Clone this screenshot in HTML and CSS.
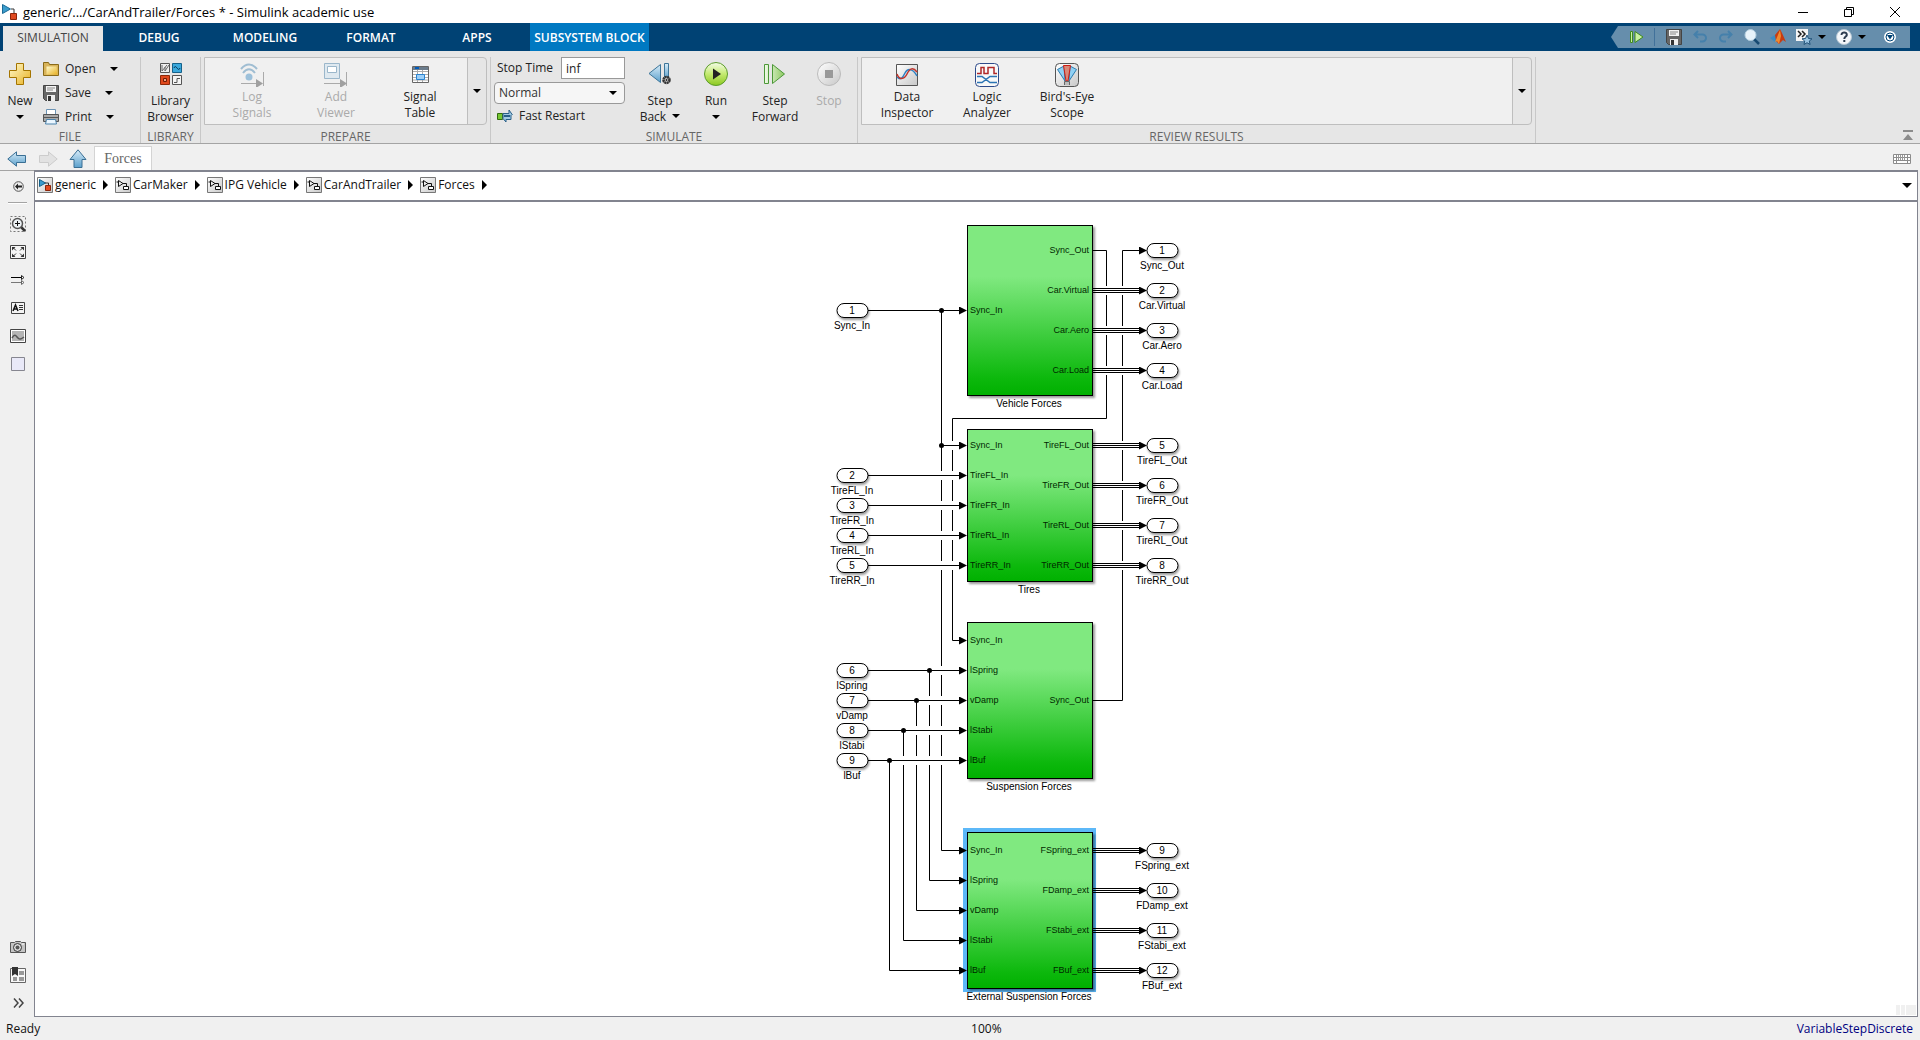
FILE: index.html
```html
<!DOCTYPE html>
<html lang="en">
<head>
  <meta charset="UTF-8" />
  <meta name="viewport" content="width=device-width, initial-scale=1.0"/>
  <title>generic/.../CarAndTrailer/Forces * - Simulink academic use</title>
  <link rel="stylesheet" href="styles.css">
</head>
<body>
  <!-- shared icons and gradients -->
  <svg class="defs" width="0" height="0" aria-hidden="true">
    <defs>
      <linearGradient id="gold" x1="0" y1="0" x2="1" y2="1"><stop offset="0" stop-color="#fffbd0"/><stop offset="1" stop-color="#e8b020"/></linearGradient>
      <linearGradient id="blue" x1="0" y1="0" x2="0" y2="1"><stop offset="0" stop-color="#d8ecf8"/><stop offset="1" stop-color="#5ba0cc"/></linearGradient>
      <linearGradient id="grey" x1="0" y1="0" x2="1" y2="1"><stop offset="0" stop-color="#ffffff"/><stop offset="1" stop-color="#c8c8c8"/></linearGradient>
      <linearGradient id="lime" x1="0" y1="0" x2="0" y2="1"><stop offset="0" stop-color="#f4fce8"/><stop offset="0.5" stop-color="#c4ea70"/><stop offset="1" stop-color="#8cc820"/></linearGradient>
      <linearGradient id="leaf" x1="0" y1="0" x2="1" y2="0"><stop offset="0" stop-color="#f0fae8"/><stop offset="1" stop-color="#8cc860"/></linearGradient>
      <linearGradient id="block" x1="0" y1="0" x2="0" y2="1"><stop offset="0.3" stop-color="#80e980"/><stop offset="0.9" stop-color="#0cb80c"/><stop offset="1" stop-color="#00b000"/></linearGradient>
      <marker id="arrow" markerUnits="userSpaceOnUse" markerWidth="8" markerHeight="8" refX="7" refY="4" orient="auto"><path d="M0 0L8 4L0 8z"/></marker>
    </defs>
    <symbol id="caret" viewBox="0 0 8 4"><path d="M0 0h8L4 4z"/></symbol>
    <symbol id="next" viewBox="0 0 5 10"><path d="M0 0L5 5L0 10z"/></symbol>
    <symbol id="floppy" viewBox="0 0 16 16">
      <path d="M.5.5h15v15h-13l-2-2z" fill="#666" stroke="#444"/>
      <path d="M3 1h10v6H3z" fill="#f4f4f4"/><path d="M4 3h8M4 5h6" stroke="#888"/>
      <path d="M4 10h8v6H4z" fill="#eee"/><path d="M5 11h3v5H5z" fill="#333"/>
    </symbol>
    <symbol id="subsystem" viewBox="0 0 16 16">
      <path d="M.5.5h15v15H.5z" fill="url(#grey)" stroke="#777"/>
      <path d="M3.500 3.500v6l4.500-3zM1.500 5h2M8 6.500h3.500V9" fill="none" stroke="#111"/><path d="M8.500 9.500h5v3h-5z" fill="#fff" stroke="#111"/>
    </symbol>
  </svg>

  <header class="titlebar">
    <svg width="16" height="16" viewBox="0 0 16 16"><path d="M.5.5l8 4.500-8 4.500z" fill="#3a9ccc" stroke="#1b6a96"/><path d="M9 5h3v5" fill="none" stroke="#333"/><path d="M8.500 9.500h6v6h-6z" fill="#e04a20" stroke="#8c2408"/></svg>
    <h1>generic/.../CarAndTrailer/Forces * - Simulink academic use</h1>
    <div class="window-buttons">
      <button aria-label="Minimize"><svg width="10" height="10"><path d="M0 5.500h10" stroke="#000"/></svg></button>
      <button aria-label="Restore"><svg width="10" height="10"><path d="M.5 2.500h7v7h-7zM2.500 2V.5h7v7H8" fill="none" stroke="#000"/></svg></button>
      <button aria-label="Close"><svg width="10" height="10"><path d="M0 0l10 10M10 0L0 10" stroke="#000"/></svg></button>
    </div>
  </header>

  <nav class="tabs">
    <button class="tab active">SIMULATION</button>
    <button class="tab">DEBUG</button>
    <button class="tab">MODELING</button>
    <button class="tab">FORMAT</button>
    <button class="tab">APPS</button>
    <button class="tab context">SUBSYSTEM BLOCK</button>
    <div class="quick">
      <button class="quick-run" aria-label="Run"><svg width="14" height="14" viewBox="0 0 14 14"><path d="M.5 1.500h2v11h-2zM5 1.500l8 5.500-8 5.500z" fill="#c8f0a0" stroke="#3f8a20"/></svg></button>
      <button aria-label="Save"><svg width="16" height="16"><use href="#floppy"/></svg></button>
      <button aria-label="Undo"><svg width="16" height="16" viewBox="0 0 16 16"><path d="M6 2L2.500 5.500 6 9M3 5.500h7.500a3.500 3.500 0 0 1 0 7H8" fill="none" stroke="#4580ab" stroke-width="2"/></svg></button>
      <button aria-label="Redo"><svg width="16" height="16" viewBox="0 0 16 16"><path d="M10 2l3.500 3.500L10 9M13 5.500H5.500a3.500 3.500 0 0 0 0 7H8" fill="none" stroke="#4580ab" stroke-width="2"/></svg></button>
      <button aria-label="Search"><svg width="16" height="16" viewBox="0 0 16 16"><path d="M10 10l5 5" stroke="#184a72" stroke-width="2.500"/><circle cx="6.500" cy="6" r="5.500" fill="#e8f3fa" stroke="#b4cede"/></svg></button>
      <button aria-label="MATLAB"><svg width="16" height="16" viewBox="0 0 16 16"><path d="M0 9l5-3 3 3-3 4z" fill="#3b8cc4"/><path d="M5 6l5-6 2 4 4 9-3-2-4 4-3-3z" fill="#c83c10"/><path d="M5 13l5-12 1 6-2 8-2-3z" fill="#f08a30"/></svg></button>
      <button aria-label="Shortcuts"><svg width="16" height="16" viewBox="0 0 16 16"><path d="M0 0h12v12H0z" fill="#f5f5f5"/><path d="M2 2l3 3-3 3M6 2l3 3-3 3" fill="none" stroke="#222" stroke-width="1.500"/><path d="M11 6l1.500 3.500 3.500.3-2.700 2.200.8 3.500-3.100-1.800L8 15.500l.7-3.500L6 9.800l3.500-.3z" fill="#9ac4e2" stroke="#235379"/></svg><svg class="caret" width="8" height="4"><use href="#caret"/></svg></button>
      <button aria-label="Help"><svg width="16" height="16" viewBox="0 0 16 16"><circle cx="8" cy="8" r="7.500" fill="#f4f7fa" stroke="#b8c8d4"/><path d="M5.500 6c0-3.500 5.500-3.300 5.300 0 0 1.500-2.500 1.800-2.500 4M8.300 11v2" fill="none" stroke="#2c3c50" stroke-width="2"/></svg><svg class="caret" width="8" height="4"><use href="#caret"/></svg></button>
      <button aria-label="Quick access menu"><svg width="12" height="12" viewBox="0 0 12 12"><circle cx="6" cy="6" r="5" fill="#fff" stroke="#fff" stroke-width="2"/><circle cx="6" cy="6" r="4" fill="#fff" stroke="#004274"/><path d="M3 4h6L6 8.500z" fill="#004274"/></svg></button>
    </div>
  </nav>

  <section class="toolstrip">
    <div class="group file">
      <div class="tools">
        <button class="big new"><svg width="22" height="22" viewBox="0 0 22 22"><path d="M7.500.5h7v7h7v7h-7v7h-7v-7h-7v-7h7z" fill="url(#gold)" stroke="#a47400"/></svg><span>New</span><svg class="caret" width="8" height="4"><use href="#caret"/></svg></button>
        <div class="stack">
          <button class="small"><svg width="16" height="14" viewBox="0 0 16 14"><path d="M.5 13.500V.5h5l1 2h9v11z" fill="#d9b45a" stroke="#8a6a18"/><path d="M3.500 4.500h10l1 8h-11z" fill="url(#gold)"/></svg><span>Open</span><svg class="caret" width="8" height="4"><use href="#caret"/></svg></button>
          <button class="small"><svg width="16" height="16"><use href="#floppy"/></svg><span>Save</span><svg class="caret" width="8" height="4"><use href="#caret"/></svg></button>
          <button class="small"><svg width="16" height="16" viewBox="0 0 16 16"><path d="M3.500.5h9v6h-9z" fill="#fff" stroke="#6b93b4"/><path d="M.5 5.500h15v7H.5z" fill="#a8a8a8" stroke="#555"/><path d="M1 8.500h14" stroke="#555"/><path d="M3.500 10.500h9l1 4.500h-11z" fill="#eaf6ff" stroke="#4b83ac"/></svg><span>Print</span><svg class="caret" width="8" height="4"><use href="#caret"/></svg></button>
        </div>
      </div>
      <h2>FILE</h2>
    </div>

    <div class="group library">
      <div class="tools">
        <button class="big"><svg width="22" height="22" viewBox="0 0 22 22"><path d="M.5.5h9v9h-9z" fill="#eee" stroke="#555"/><path d="M2 2v6l5-6M5 4v4l4-6" fill="none" stroke="#666"/><path d="M12.500.5h9v9h-9z" fill="#3aa8dc" stroke="#14618a"/><path d="M14 5c2-5 4 5 6 0" fill="none" stroke="#073a58"/><path d="M.5 12.500h9v9h-9z" fill="#e0481c" stroke="#8c2808"/><path d="M3.500 15.500h3v3h-3z" fill="#f4a080" stroke="#701c04"/><path d="M12.500 12.500h9v9h-9z" fill="#f4f4f4" stroke="#555"/><path d="M14 19.500h3v-4h3" fill="none" stroke="#555"/></svg><span>Library<br>Browser</span></button>
      </div>
      <h2>LIBRARY</h2>
    </div>

    <div class="group prepare">
      <div class="gallery">
        <div class="gallery-items">
          <button class="big" disabled><svg width="24" height="24" viewBox="0 0 24 24"><path d="M1 6c5-6 11-6 16 0M3 10c4-5 8-5 12 0" fill="none" stroke="#9fbdd2" stroke-width="2"/><circle cx="9" cy="14" r="3.500" fill="#9cc0da"/><path d="M1 20.500h16M23.500 9v14" stroke="#aaa"/><path d="M16 16l7 4.500-7 4.500z" fill="#a0a0a0"/></svg><span>Log<br>Signals</span></button>
          <button class="big" disabled><svg width="24" height="24" viewBox="0 0 24 24"><path d="M.5.500h15v15H.5z" fill="#dfe9f0" stroke="#9bb7cb"/><path d="M3.500 3.500h9v6h-9z" fill="#fff" stroke="#9bb7cb"/><path d="M0 20.500h16M22.500 9v14" stroke="#aaa"/><path d="M16 16l7 4.500-7 4.500z" fill="#a0a0a0"/></svg><span>Add<br>Viewer</span></button>
          <button class="big"><svg width="24" height="24" viewBox="0 0 24 24"><path d="M4.500 3.500h16v16h-16z" fill="#fff" stroke="#666"/><path d="M5 4h15v3H5z" fill="#6b7c8c"/><path d="M7 5h4" stroke="#005bbb" stroke-width="2"/><path d="M5 8.500h15M5 11.500h15M5 14.500h15M5 17h15M9.500 7v12M14.500 7v12" stroke="#aaa"/><path d="M8.500 11.500h8v5h-8z" fill="#9ccff8" stroke="#2a83d0"/></svg><span>Signal<br>Table</span></button>
        </div>
        <button class="gallery-more" aria-label="More prepare tools"><svg width="8" height="4"><use href="#caret"/></svg></button>
      </div>
      <h2>PREPARE</h2>
    </div>

    <div class="group simulate">
      <div class="tools">
        <div class="run-options">
          <div class="stop-time"><label for="stop-time">Stop Time</label><input id="stop-time" type="text" value="inf"></div>
          <div class="mode"><select aria-label="Simulation mode"><option>Normal</option></select><svg class="mode-caret" width="8" height="4"><use href="#caret"/></svg></div>
          <button class="small"><svg width="16" height="14" viewBox="0 0 16 14"><path d="M.5 4.500h5v6h-5z" fill="#77c832" stroke="#336b10"/><path d="M6 9V4.500h6V1l3.500 5M14 6v4.500H9V13L5.500 9" fill="#a0cae4" stroke="#285f88"/><path d="M7 7h6" stroke="#285f88" stroke-width="2"/></svg><span>Fast Restart</span></button>
        </div>
        <button class="big"><svg width="24" height="24" viewBox="0 0 24 24"><path d="M12.500 2.500v18L1 11.500z" fill="url(#blue)" stroke="#3d7599"/><path d="M16.500 1.500h4v15h-4z" fill="url(#blue)" stroke="#3d7599"/><circle cx="18.500" cy="18" r="3" fill="#ddd" stroke="#333" stroke-width="2.500" stroke-dasharray="2 .4"/><circle cx="18.500" cy="18" r="1" fill="#222"/></svg><span>Step<br>Back <svg class="caret" width="8" height="4"><use href="#caret"/></svg></span></button>
        <button class="big run"><svg width="24" height="24" viewBox="0 0 24 24"><circle cx="12" cy="12" r="11.500" fill="url(#lime)" stroke="#5c9c2c"/><path d="M9 6.500l8 5.500-8 5.500z" fill="#222"/></svg><span>Run</span><svg class="caret" width="8" height="4"><use href="#caret"/></svg></button>
        <button class="big forward"><svg width="24" height="24" viewBox="0 0 24 24"><path d="M1.500 2.500h4v19h-4zM9.500 2.500l12 9.500-12 9.500z" fill="url(#leaf)" stroke="#4c9838"/></svg><span>Step<br>Forward</span></button>
        <button class="big stop" disabled><svg width="24" height="24" viewBox="0 0 24 24"><circle cx="12" cy="12" r="11.500" fill="url(#grey)" stroke="#bbb"/><path d="M8 8h8v8H8z" fill="#999"/></svg><span>Stop</span></button>
      </div>
      <h2>SIMULATE</h2>
    </div>

    <div class="group review">
      <div class="gallery">
        <div class="gallery-items">
          <button class="big"><svg width="24" height="24" viewBox="0 0 24 24"><path d="M1.500 1.500h21v21h-21z" fill="url(#grey)" stroke="#555"/><path d="M2 14c4 4 6 0 8-4s7-6 12 3" fill="none" stroke="#2c80c4" stroke-width="1.500"/><path d="M2 11c2 6 7 6 10 0s6-7 10-2" fill="none" stroke="#c0342c" stroke-width="1.500"/></svg><span>Data<br>Inspector</span></button>
          <button class="big"><svg width="24" height="24" viewBox="0 0 24 24"><rect x=".5" y=".5" width="23" height="23" rx="4" fill="#f8f8f8" stroke="#2d4a8a"/><path d="M2 10.500h4v-6h3v6h4v-6h6v6h3" fill="none" stroke="#b02828" stroke-width="1.500"/><path d="M2 13.500h5l8 6h7M2 19.500h5l8-6h7" fill="none" stroke="#2c74b4" stroke-width="1.500"/></svg><span>Logic<br>Analyzer</span></button>
          <button class="big"><svg width="24" height="24" viewBox="0 0 24 24"><rect x=".5" y=".5" width="23" height="23" rx="4" fill="url(#grey)" stroke="#555"/><path d="M2.500 6.500L9 3l1 15zM21.500 6.500L15 3l-1 15z" fill="#8fd0f4" stroke="#2a7cb0"/><path d="M8.500 2.500h7L13 18h-2z" fill="#d88878" stroke="#cc1c14"/><path d="M9.500 22v-3.500h5V22" fill="#bbb" stroke="#666"/></svg><span>Bird's-Eye<br>Scope</span></button>
        </div>
        <button class="gallery-more" aria-label="More review tools"><svg width="8" height="4"><use href="#caret"/></svg></button>
      </div>
      <h2>REVIEW RESULTS</h2>
    </div>
    <button class="collapse" aria-label="Minimize toolstrip"><svg width="10" height="10"><path d="M0 0h10v2H0zM5 4l5 6H0z" fill="#8c8c8c"/></svg></button>
  </section>

  <div class="docbar">
    <button aria-label="Back"><svg width="20" height="16" viewBox="0 0 20 16"><path d="M.8 8L9.500.8v3.700h9v7h-9v3.700z" fill="url(#blue)" stroke="#3a6f94"/></svg></button>
    <button aria-label="Forward" disabled><svg width="20" height="16" viewBox="0 0 20 16"><path d="M19.200 8L10.500.8v3.700h-9v7h9v3.700z" fill="#e2e2e2" stroke="#ccc"/></svg></button>
    <button aria-label="Up"><svg width="18" height="19" viewBox="0 0 18 19"><path d="M9 .8l8 9.700h-4v8H5v-8H1z" fill="url(#blue)" stroke="#3a6f94"/></svg></button>
    <button class="doc-tab">Forces</button>
    <button class="keyboard" aria-label="Keyboard"><svg width="18" height="10" viewBox="0 0 18 10"><path d="M.5.500h17v9H.5zM0 3.500h18M0 6.500h18M3.500 0v10M14.500 0v10" fill="#fff" stroke="#8c8c8c"/><path d="M5.500 1v5M7.500 1v5M9.500 1v5M11.500 1v5" stroke="#999"/></svg></button>
  </div>

  <main class="workspace">
    <aside class="palette">
      <button class="hide-browser" aria-label="Hide browser"><svg width="11" height="11" viewBox="0 0 11 11"><circle cx="5.500" cy="5.500" r="4.800" fill="#eee" stroke="#555"/><path d="M2 5.500l3-3v2h4v2H5v2z" fill="#222"/></svg></button>
      <hr>
      <button aria-label="Zoom"><svg width="16" height="16" viewBox="0 0 16 16"><path d="M.5.500h15v15H.5z" fill="none" stroke="#777" stroke-dasharray="2 2"/><path d="M11 11l4 4" stroke="#333" stroke-width="2.500"/><circle cx="7.500" cy="7.500" r="5" fill="#eef3f6" stroke="#555" stroke-width="1.500"/><path d="M5 7.500h5M7.500 5v5" stroke="#111"/></svg></button>
      <button aria-label="Fit to view"><svg width="16" height="14" viewBox="0 0 16 14"><path d="M.5.500h15v13H.5z" fill="#f6f6f6" stroke="#444"/><path d="M6 5.500L3 2.500M10 5.500l3-3M6 8.500l-3 3M10 8.500l3 3" stroke="#333"/><path d="M2 2h3.500L2 5.500zM14 2v3.500L10.500 2zM2 12V8.500L5.500 12zM14 12h-3.500L14 8.500z" fill="#333"/></svg></button>
      <button aria-label="Sample time"><svg width="14" height="12" viewBox="0 0 14 12"><path d="M0 3.500h11" stroke="#000"/><path d="M0 8.500h11" stroke="#777"/><path d="M10.500 1.500l2.500 2-2.500 2z" fill="#fff" stroke="#222"/><path d="M10.500 6.500l2.500 2-2.500 2z" fill="#fff" stroke="#666"/></svg></button>
      <button aria-label="Annotation"><svg width="14" height="12" viewBox="0 0 14 12"><path d="M.5.500h13v11H.5z" fill="#f4f4f4" stroke="#444"/><path d="M2 9l2.500-6L7 9M3 7h3" fill="none" stroke="#111" stroke-width="1.500"/><path d="M8 3.500h4M8 5.500h4M8 7.500h4" stroke="#333"/></svg></button>
      <button aria-label="Image"><svg width="16" height="14" viewBox="0 0 16 14"><path d="M.5.500h15v13H.5z" fill="#fff" stroke="#444"/><path d="M2 2h12v10H2z" fill="#b4b4b4"/><path d="M2 9c3-5 4-2 6 0s3 1 6-1" fill="none" stroke="#555" stroke-width="1.500"/></svg></button>
      <button aria-label="Area"><svg width="14" height="14"><path d="M.5.500h13v13H.5z" fill="#e9e9f8" stroke="#868690"/></svg></button>
      <button class="to-bottom" aria-label="Screenshot"><svg width="16" height="12" viewBox="0 0 16 12"><path d="M.5 1.500h4l1-1h5l1 1h4v10H.5z" fill="#c4c4c4" stroke="#555"/><circle cx="7.500" cy="6.500" r="4" fill="#ddd" stroke="#333"/><circle cx="7.500" cy="6.500" r="2" fill="#555"/><path d="M12 3h2" stroke="#fff"/></svg></button>
      <button aria-label="Viewmarks"><svg width="16" height="16" viewBox="0 0 16 16"><path d="M.5 1.500h15v14H.5z" fill="#f8f8f8" stroke="#666"/><path d="M9 4h5v4H9zM3 10h4v4H3zM9 10h5v4H9z" fill="#999"/><path d="M2 0h6v9L5 7 2 9z" fill="#333"/></svg></button>
      <button aria-label="More"><svg width="11" height="10"><path d="M1 .5L5 5 1 9.500M6 .5L10 5 6 9.500" fill="none" stroke="#444" stroke-width="1.500"/></svg></button>
    </aside>

    <section class="editor">
      <nav class="breadcrumb">
        <a href="#"><svg width="16" height="16" viewBox="0 0 16 16"><path d="M.5.500h15v15H.5z" fill="url(#grey)" stroke="#777"/><path d="M2.500 2.500l6 3.500-6 3.500z" fill="#3a9ccc" stroke="#14618a"/><path d="M8 6h3.500v3" fill="none" stroke="#333"/><path d="M8.500 8.500h5v5h-5z" fill="#e04a20" stroke="#8c2408"/></svg>generic</a>
        <svg width="5" height="10"><use href="#next"/></svg>
        <a href="#"><svg width="16" height="16"><use href="#subsystem"/></svg>CarMaker</a>
        <svg width="5" height="10"><use href="#next"/></svg>
        <a href="#"><svg width="16" height="16"><use href="#subsystem"/></svg>IPG Vehicle</a>
        <svg width="5" height="10"><use href="#next"/></svg>
        <a href="#"><svg width="16" height="16"><use href="#subsystem"/></svg>CarAndTrailer</a>
        <svg width="5" height="10"><use href="#next"/></svg>
        <a href="#"><svg width="16" height="16"><use href="#subsystem"/></svg>Forces</a>
        <svg width="5" height="10"><use href="#next"/></svg>
        <button class="history" aria-label="History"><svg width="10" height="5" viewBox="0 0 8 4"><use href="#caret"/></svg></button>
      </nav>

      <div class="canvas">
        <svg class="diagram" width="440" height="814" viewBox="756 202 440 814">
          <rect class="selection" x="963" y="828" width="133" height="164"/>
          <!-- vertical runs of the branched signals -->
          <path class="wire" d="M941.500 310.500V850.500M952.500 418.500V640.500M1106.500 250.500V418.500M1122.500 250.500V700.500M929.500 670.500V880.500M916.500 700.500V910.500M903.500 730.500V940.500M889.500 760.500V970.500"/>
          <!-- gaps where a signal passes under another -->
          <path class="gap" d="M939 475.500h5M939 505.500h5M939 535.500h5M939 565.500h5M939 670.500h5M939 700.500h5M939 730.500h5M939 760.500h5M950 445.500h5M950 475.500h5M950 505.500h5M950 535.500h5M950 565.500h5M1104 290.500h5M1104 330.500h5M1104 370.500h5M1120 290.500h5M1120 330.500h5M1120 370.500h5M1120 445.500h5M1120 485.500h5M1120 525.500h5M1120 565.500h5M927 700.500h5M927 730.500h5M927 760.500h5M914 730.500h5M914 760.500h5M901 760.500h5"/>
          <path class="wire" d="M952.500 418.500H1106.500M1093 250.500h13.500M1093 700.500h29.500"/>

          <g class="wire to-port">
            <path d="M868 310.500H966"/><path d="M941.500 445.500H966"/><path d="M868 475.500H966"/><path d="M868 505.500H966"/><path d="M868 535.500H966"/><path d="M868 565.500H966"/>
            <path d="M952.500 640.500H966"/><path d="M868 670.500H966"/><path d="M868 700.500H966"/><path d="M868 730.500H966"/><path d="M868 760.500H966"/>
            <path d="M941.500 850.500H966"/><path d="M929.500 880.500H966"/><path d="M916.500 910.500H966"/><path d="M903.500 940.500H966"/><path d="M889.500 970.500H966"/>
            <path d="M1122.500 250.500H1146"/>
            <path d="M1093 290.500H1146"/><path d="M1093 330.500H1146"/><path d="M1093 370.500H1146"/>
            <path d="M1093 445.500H1146"/><path d="M1093 485.500H1146"/><path d="M1093 525.500H1146"/><path d="M1093 565.500H1146"/>
            <path d="M1093 850.500H1146"/><path d="M1093 890.500H1146"/><path d="M1093 930.500H1146"/><path d="M1093 970.500H1146"/>
          </g>
          <!-- outer lines of the bus signals -->
          <path class="wire" d="M1093 288.500h48M1093 292.500h48M1093 328.500h48M1093 332.500h48M1093 368.500h48M1093 372.500h48M1093 443.500h48M1093 447.500h48M1093 483.500h48M1093 487.500h48M1093 523.500h48M1093 527.500h48M1093 563.500h48M1093 567.500h48M1093 848.500h48M1093 852.500h48M1093 888.500h48M1093 892.500h48M1093 928.500h48M1093 932.500h48M1093 968.500h48M1093 972.500h48"/>
          <g class="branch">
            <circle cx="941.500" cy="310.500" r="2.500"/><circle cx="941.500" cy="445.500" r="2.500"/><circle cx="929.500" cy="670.500" r="2.500"/><circle cx="916.500" cy="700.500" r="2.500"/><circle cx="903.500" cy="730.500" r="2.500"/><circle cx="889.500" cy="760.500" r="2.500"/>
          </g>

          <g class="block">
            <rect x="967.500" y="225.500" width="125" height="170"/>
            <rect x="967.500" y="429.500" width="125" height="152"/>
            <rect x="967.500" y="622.500" width="125" height="156"/>
            <rect x="967.500" y="832.500" width="125" height="156"/>
          </g>
          <g class="name">
            <text x="1029" y="407">Vehicle Forces</text>
            <text x="1029" y="593">Tires</text>
            <text x="1029" y="790">Suspension Forces</text>
            <text x="1029" y="1000">External Suspension Forces</text>
          </g>
          <g class="port-in">
            <text x="970" y="313">Sync_In</text>
            <text x="970" y="448">Sync_In</text>
            <text x="970" y="478">TireFL_In</text>
            <text x="970" y="508">TireFR_In</text>
            <text x="970" y="538">TireRL_In</text>
            <text x="970" y="568">TireRR_In</text>
            <text x="970" y="643">Sync_In</text>
            <text x="970" y="673">lSpring</text>
            <text x="970" y="703">vDamp</text>
            <text x="970" y="733">lStabi</text>
            <text x="970" y="763">lBuf</text>
            <text x="970" y="853">Sync_In</text>
            <text x="970" y="883">lSpring</text>
            <text x="970" y="913">vDamp</text>
            <text x="970" y="943">lStabi</text>
            <text x="970" y="973">lBuf</text>
          </g>
          <g class="port-out">
            <text x="1089" y="253">Sync_Out</text>
            <text x="1089" y="293">Car.Virtual</text>
            <text x="1089" y="333">Car.Aero</text>
            <text x="1089" y="373">Car.Load</text>
            <text x="1089" y="448">TireFL_Out</text>
            <text x="1089" y="488">TireFR_Out</text>
            <text x="1089" y="528">TireRL_Out</text>
            <text x="1089" y="568">TireRR_Out</text>
            <text x="1089" y="703">Sync_Out</text>
            <text x="1089" y="853">FSpring_ext</text>
            <text x="1089" y="893">FDamp_ext</text>
            <text x="1089" y="933">FStabi_ext</text>
            <text x="1089" y="973">FBuf_ext</text>
          </g>

          <g class="terminal">
            <rect x="837" y="303.500" width="31" height="14" rx="7"/>
            <rect x="837" y="468.500" width="31" height="14" rx="7"/>
            <rect x="837" y="498.500" width="31" height="14" rx="7"/>
            <rect x="837" y="528.500" width="31" height="14" rx="7"/>
            <rect x="837" y="558.500" width="31" height="14" rx="7"/>
            <rect x="837" y="663.500" width="31" height="14" rx="7"/>
            <rect x="837" y="693.500" width="31" height="14" rx="7"/>
            <rect x="837" y="723.500" width="31" height="14" rx="7"/>
            <rect x="837" y="753.500" width="31" height="14" rx="7"/>
            <rect x="1147" y="243.500" width="31" height="14" rx="7"/>
            <rect x="1147" y="283.500" width="31" height="14" rx="7"/>
            <rect x="1147" y="323.500" width="31" height="14" rx="7"/>
            <rect x="1147" y="363.500" width="31" height="14" rx="7"/>
            <rect x="1147" y="438.500" width="31" height="14" rx="7"/>
            <rect x="1147" y="478.500" width="31" height="14" rx="7"/>
            <rect x="1147" y="518.500" width="31" height="14" rx="7"/>
            <rect x="1147" y="558.500" width="31" height="14" rx="7"/>
            <rect x="1147" y="843.500" width="31" height="14" rx="7"/>
            <rect x="1147" y="883.500" width="31" height="14" rx="7"/>
            <rect x="1147" y="923.500" width="31" height="14" rx="7"/>
            <rect x="1147" y="963.500" width="31" height="14" rx="7"/>
          </g>
          <g class="name">
            <text x="852" y="314">1</text><text x="852" y="329">Sync_In</text>
            <text x="852" y="479">2</text><text x="852" y="494">TireFL_In</text>
            <text x="852" y="509">3</text><text x="852" y="524">TireFR_In</text>
            <text x="852" y="539">4</text><text x="852" y="554">TireRL_In</text>
            <text x="852" y="569">5</text><text x="852" y="584">TireRR_In</text>
            <text x="852" y="674">6</text><text x="852" y="689">lSpring</text>
            <text x="852" y="704">7</text><text x="852" y="719">vDamp</text>
            <text x="852" y="734">8</text><text x="852" y="749">lStabi</text>
            <text x="852" y="764">9</text><text x="852" y="779">lBuf</text>
            <text x="1162" y="254">1</text><text x="1162" y="269">Sync_Out</text>
            <text x="1162" y="294">2</text><text x="1162" y="309">Car.Virtual</text>
            <text x="1162" y="334">3</text><text x="1162" y="349">Car.Aero</text>
            <text x="1162" y="374">4</text><text x="1162" y="389">Car.Load</text>
            <text x="1162" y="449">5</text><text x="1162" y="464">TireFL_Out</text>
            <text x="1162" y="489">6</text><text x="1162" y="504">TireFR_Out</text>
            <text x="1162" y="529">7</text><text x="1162" y="544">TireRL_Out</text>
            <text x="1162" y="569">8</text><text x="1162" y="584">TireRR_Out</text>
            <text x="1162" y="854">9</text><text x="1162" y="869">FSpring_ext</text>
            <text x="1162" y="894">10</text><text x="1162" y="909">FDamp_ext</text>
            <text x="1162" y="934">11</text><text x="1162" y="949">FStabi_ext</text>
            <text x="1162" y="974">12</text><text x="1162" y="989">FBuf_ext</text>
          </g>
        </svg>
        <svg class="grip" width="20" height="10"><path d="M0 0h4v10H0zM5 0h4v10H5zM10 0h10v10H10z" fill="#f0f0f0"/></svg>
      </div>
    </section>
  </main>

  <footer class="status">
    <span>Ready</span>
    <span>100%</span>
    <a href="#">VariableStepDiscrete</a>
  </footer>
</body>
</html>
```

FILE: styles.css
```css
:root {
  --navy: #004274;
  --azure: #0079c2;
  --strip: #e6e6e6;
  --panel: #f0f0f0;
  --frame: #82848f;
  --line: #bebebe;
}

* {
  margin: 0;
  padding: 0;
  box-sizing: border-box;
}

body {
  display: flex;
  flex-direction: column;
  height: 100vh;
  overflow: hidden;
  background: var(--panel);
  color: #222;
  font-family: 'Segoe UI', 'Open Sans', sans-serif;
  font-size: 12px;
  line-height: 16px;
}

button {
  display: flex;
  align-items: center;
  justify-content: center;
  border: 0;
  background: none;
  color: inherit;
  font: inherit;
}

button:disabled {
  color: #aaa;
}

svg {
  flex: none;
}

a {
  color: inherit;
  text-decoration: none;
}

.defs {
  position: absolute;
}

/* title bar */
.titlebar {
  display: flex;
  align-items: center;
  gap: 5px;
  height: 23px;
  padding-left: 2px;
  background: #fff;
  color: #000;
}

.titlebar h1 {
  font-size: 13px;
  font-weight: normal;
}

.window-buttons {
  display: flex;
  margin-left: auto;
  padding-right: 2px;
}

.window-buttons button {
  width: 46px;
  height: 20px;
}

/* toolstrip tabs */
.tabs {
  display: flex;
  height: 28px;
  background: var(--navy);
}

.tab {
  width: 106px;
  padding-bottom: 2px;
  border: solid transparent;
  border-width: 3px 3px 0;
  background-clip: padding-box;
  color: #fff;
  font-weight: 600;
}

.tab.active {
  background-color: var(--strip);
  color: #444;
  font-weight: normal;
}

.tab.context {
  width: 119px;
  border-width: 3px 0 0;
  background: var(--azure);
}

.quick {
  display: flex;
  align-items: center;
  gap: 10px;
  height: 22px;
  margin: 3px 10px 0 auto;
  padding: 0 14px 0 19px;
  background: #668eac;
  clip-path: polygon(7px 0, 100% 0, 100% 100%, 7px 100%, 0 50%);
}

.quick button {
  gap: 6px;
}

.quick-run {
  height: 18px;
  padding-right: 10px;
}

.quick .quick-run {
  margin-right: 1px;
  border-right: 1px solid #41719a;
}

.quick button:last-child {
  margin-left: 8px;
}

/* toolstrip */
.toolstrip {
  display: flex;
  height: 93px;
  padding-top: 6px;
  border-bottom: 1px solid #a4a4a4;
  background: var(--strip);
}

.group {
  display: flex;
  flex-direction: column;
  padding: 0 3px;
  border-right: 1px solid #c8c8c8;
}

.group h2 {
  height: 18px;
  color: #666;
  font-size: 12px;
  font-weight: normal;
  line-height: 24px;
  text-align: center;
}

.file { width: 141px; }
.library { width: 60px; }
.prepare { width: 290px; }
.simulate { width: 367px; }
.review { width: 678px; }

.tools {
  display: flex;
  height: 68px;
}

.big {
  flex-direction: column;
  justify-content: flex-start;
  gap: 6px;
  width: 54px;
  padding-top: 5px;
}

.big > svg:first-child {
  height: 24px;
}

.big > span {
  margin-top: 1px;
}

.new {
  width: 34px;
}

.run {
  width: 58px;
}

.forward {
  width: 60px;
}

.stop {
  width: 48px;
}

.stack {
  display: flex;
  flex-direction: column;
  padding-left: 6px;
}

.small {
  flex: none;
  justify-content: flex-start;
  gap: 6px;
  height: 24px;
}

.small .caret {
  margin-left: 8px;
}

.big span .caret {
  margin-left: 3px;
  vertical-align: 3px;
}

.gallery {
  display: flex;
  height: 68px;
  border: 1px solid var(--line);
  border-radius: 0 4px 4px 0;
}

.gallery-items {
  display: flex;
  flex: 1;
  padding-left: 5px;
  background: #f0f0f0;
}

.gallery .big {
  width: 84px;
  gap: 0;
}

.gallery .big > span {
  margin-top: 2px;
}

.review .gallery .big {
  width: 80px;
}

.gallery-more {
  width: 19px;
  border-left: 1px solid var(--line);
}

.run-options {
  width: 131px;
  margin-right: 8px;
}

.stop-time {
  display: flex;
  align-items: center;
  justify-content: space-between;
  padding-left: 3px;
}

.stop-time input {
  width: 64px;
  height: 22px;
  padding-left: 4px;
  border: 1px solid #999;
  background: #fff;
  color: #222;
  font: inherit;
}

.mode {
  position: relative;
  height: 22px;
  margin-top: 3px;
}

.mode select {
  width: 131px;
  height: 22px;
  padding-left: 4px;
  border: 1px solid #999;
  border-radius: 4px;
  background: #f6f6f6;
  color: #333;
  font: inherit;
  appearance: none;
}

.mode-caret {
  position: absolute;
  top: 9px;
  right: 8px;
}

.run-options .small {
  padding-left: 3px;
}

.collapse {
  align-self: flex-end;
  margin: 0 7px 3px auto;
}

/* document bar */
.docbar {
  display: flex;
  align-items: center;
  gap: 11px;
  height: 26px;
  padding: 3px 9px 0 7px;
}

.doc-tab {
  align-self: flex-end;
  width: 58px;
  height: 24px;
  margin-left: -4px;
  border: 1px solid #d4d4d4;
  border-bottom: 0;
  background: #fff;
  color: #666;
  font-family: 'Liberation Serif', serif;
  font-size: 14px;
}

.keyboard {
  margin-left: auto;
}

/* workspace */
.workspace {
  display: flex;
  flex: 1;
  min-height: 0;
  padding-right: 2px;
}

.palette {
  display: flex;
  flex-direction: column;
  width: 34px;
  border-top: 1px solid #a4a4a4;
}

.palette button {
  height: 28px;
  padding-left: 2px;
}

.palette .hide-browser {
  height: 30px;
}

.palette hr {
  width: 19px;
  margin: 1px 0 6px 8px;
  border: 0;
  border-top: 1px solid #a4a4a4;
  border-bottom: 1px solid #fff;
}

.palette .to-bottom {
  margin-top: auto;
}

.editor {
  display: flex;
  flex: 1;
  flex-direction: column;
  border: 1px solid var(--frame);
}

.breadcrumb {
  display: flex;
  align-items: center;
  gap: 7px;
  height: 31px;
  padding: 0 5px 2px 2px;
  border-top: 1px solid var(--frame);
  border-bottom: 2px solid var(--frame);
  background: #fff;
  color: #111;
}

.breadcrumb a {
  display: flex;
  align-items: center;
  gap: 2px;
}

.history {
  margin-left: auto;
}

/* model canvas */
.canvas {
  position: relative;
  display: flex;
  flex: 1;
  justify-content: center;
  min-height: 0;
  background: #fff;
}

.grip {
  position: absolute;
  right: 1px;
  bottom: 1px;
}

.diagram {
  font-family: 'Liberation Sans', Arial, sans-serif;
  font-size: 10px;
}

.wire {
  fill: none;
  stroke: #000;
}

.to-port path {
  marker-end: url(#arrow);
}

.gap {
  fill: none;
  stroke: #fff;
  stroke-width: 9px;
}

.selection {
  fill: #5cb8f8;
}

.block rect {
  fill: url(#block);
  stroke: #000;
  filter: drop-shadow(2px 2px 1px rgba(0, 0, 0, 0.4));
}

.terminal rect {
  fill: #fff;
  stroke: #000;
  filter: drop-shadow(1px 2px 1px rgba(0, 0, 0, 0.4));
}

.name {
  text-anchor: middle;
}

.port-in,
.port-out {
  fill: #002800;
  font-size: 9px;
}

.port-out {
  text-anchor: end;
}

/* status bar */
.status {
  display: grid;
  grid-template-columns: 18fr auto 17fr;
  align-items: center;
  height: 23px;
  padding: 0 7px 0 6px;
  color: #111;
}

.status a {
  justify-self: end;
  color: #000080;
}
```
